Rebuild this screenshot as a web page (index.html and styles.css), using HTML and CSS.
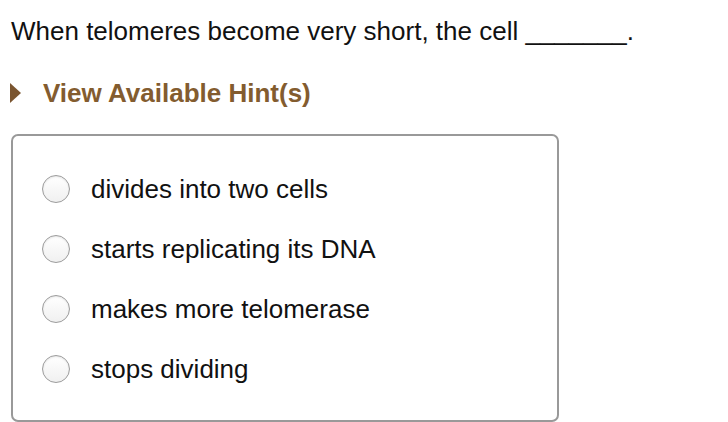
FILE: index.html
```html
<!DOCTYPE html>
<html lang="en">
<head>
    <meta charset="UTF-8">
    <title>Question</title>
    <link rel="stylesheet" href="styles.css">
</head>
<body>
<div class="question">
    <p class="prompt">When telomeres become very short, the cell _______.</p>

    <div class="hint">
        <span class="arrow"></span>
        <span class="hint-text">View Available Hint(s)</span>
    </div>

    <div class="choices">
        <label class="choice"><span class="radio"></span>divides into two cells</label>
        <label class="choice"><span class="radio"></span>starts replicating its DNA</label>
        <label class="choice"><span class="radio"></span>makes more telomerase</label>
        <label class="choice"><span class="radio"></span>stops dividing</label>
    </div>
</div>
</body>
</html>
```

FILE: styles.css
```css
body {
    margin: 0;
    padding: 0;
    background: #fff;
    font-family: "Liberation Sans", Arial, sans-serif;
    color: #111;
}

.question {
    padding: 16px 0 0 11px;
}

.prompt {
    margin: 0;
    font-size: 26px;
    line-height: 30px;
}

.hint {
    display: flex;
    align-items: center;
    margin-top: 32px;
    height: 30px;
}

.arrow {
    width: 0;
    height: 0;
    border-top: 10px solid transparent;
    border-bottom: 10px solid transparent;
    border-left: 11px solid #7a5530;
    margin-left: -1px;
    margin-right: 22px;
}

.hint-text {
    color: #835c2f;
    font-weight: bold;
    font-size: 26px;
}

.choices {
    margin-top: 26px;
    width: 544px;
    border: 2px solid #999;
    border-radius: 7px;
    padding: 38px 0 36px 0;
    display: flex;
    flex-direction: column;
    gap: 30px;
}

.choice {
    display: flex;
    align-items: center;
    font-size: 26px;
    height: 30px;
    padding-left: 29px;
}

.radio {
    width: 26px;
    height: 26px;
    border: 1px solid #9c9c9c;
    border-radius: 50%;
    background: linear-gradient(#fff, #f0f0f0);
    box-shadow: inset 0 1px 2px rgba(0, 0, 0, 0.1);
    margin-right: 21px;
}
```
